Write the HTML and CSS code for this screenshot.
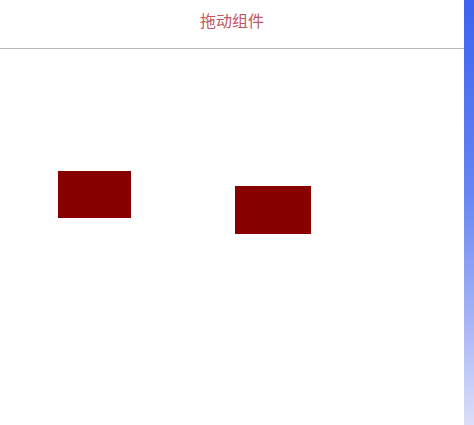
FILE: index.html
```html
<!DOCTYPE html>
<html lang="zh">
<head>
<meta charset="utf-8">
<title>拖动组件</title>
<link rel="stylesheet" href="styles.css">
</head>
<body>
<div class="app">
  <main class="main">
    <header class="header"><span class="title">拖动组件</span></header>
    <section class="canvas">
      <div class="box box-a"></div>
      <div class="box box-b"></div>
    </section>
  </main>
  <aside class="strip"></aside>
</div>
</body>
</html>
```
FILE: styles.css
```css
html, body {
  margin: 0;
  padding: 0;
  background: #ffffff;
}
.app {
  display: flex;
  width: 474px;
  height: 425px;
}
.main {
  flex: 1;
  display: flex;
  flex-direction: column;
}
.header {
  height: 49px;
  border-bottom: 1px solid #b8b8b8;
  display: flex;
  align-items: center;
  justify-content: center;
  box-sizing: border-box;
  padding-bottom: 8px;
}
.title {
  font-family: "Noto Sans CJK SC", "DejaVu Sans", sans-serif;
  font-size: 16px;
  font-weight: 400;
  color: #c25563;
  letter-spacing: 0px;
}
.canvas {
  position: relative;
  flex: 1;
}
.box {
  position: absolute;
  background: #880000;
}
.box-a {
  left: 58px;
  top: 122px;
  width: 73px;
  height: 47px;
}
.box-b {
  left: 235px;
  top: 137px;
  width: 76px;
  height: 48px;
}
.strip {
  width: 10px;
  background: linear-gradient(to bottom, #3d63f0 0%, #6585f2 45%, #a6b4f6 75%, #dcdff9 100%);
}
```
